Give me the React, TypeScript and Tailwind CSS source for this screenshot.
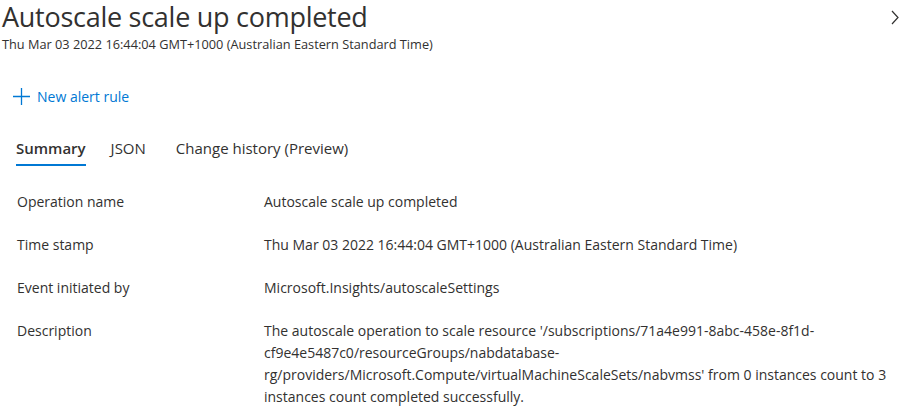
import React from 'react';

const font = { fontFamily: '"Open Sans", "Noto Sans", sans-serif' };

const rows: { label: string; value: string }[] = [
  { label: 'Operation name', value: 'Autoscale scale up completed' },
  { label: 'Time stamp', value: 'Thu Mar 03 2022 16:44:04 GMT+1000 (Australian Eastern Standard Time)' },
  { label: 'Event initiated by', value: 'Microsoft.Insights/autoscaleSettings' },
  {
    label: 'Description',
    value:
      "The autoscale operation to scale resource '/subscriptions/71a4e991-8abc-458e-8f1d-cf9e4e5487c0/resourceGroups/nabdatabase-rg/providers/Microsoft.Compute/virtualMachineScaleSets/nabvmss' from 0 instances count to 3 instances count completed successfully.",
  },
];

export default function App() {
  return (
    <div className="w-[900px] h-[413px] overflow-hidden bg-white text-[#323130]" style={font}>
      {/* header */}
      <div className="flex items-start justify-between pl-[2px] pr-[1px] pt-[1px]">
        <div>
          <h1 className="text-[27px] leading-[31px] tracking-[-0.27px] font-normal">Autoscale scale up completed</h1>
          <div className="text-[12.75px] leading-[16px] mt-[4px]">
            Thu Mar 03 2022 16:44:04 GMT+1000 (Australian Eastern Standard Time)
          </div>
        </div>
        <svg width="8" height="15" viewBox="0 0 8 15" className="mt-[9px]">
          <path d="M1 1l6 6.5-6 6.5" fill="none" stroke="#323130" strokeWidth="1.2" />
        </svg>
      </div>

      {/* command */}
      <button className="flex items-center gap-[7px] ml-[13px] mt-[34px] h-[20px] text-[14px] text-[#0078d4]">
        <svg width="17" height="17" viewBox="0 0 17 17">
          <path d="M8.5 0v17M0 8.5h17" stroke="#0078d4" strokeWidth="1.3" />
        </svg>
        New alert rule
      </button>

      {/* tabs */}
      <div className="flex ml-[16px] mt-[32px] text-[15px]">
        <div className="flex flex-col">
          <span className="font-semibold leading-[20px]">Summary</span>
          <span className="h-[2px] bg-[#0078d4] mt-[6px]" />
        </div>
        <span className="leading-[20px] ml-[25px]">JSON</span>
        <span className="leading-[20px] ml-[30px]">Change history (Preview)</span>
      </div>

      {/* details */}
      <div className="mt-[25px] text-[14px]">
        {rows.map(r => (
          <div key={r.label} className="flex pl-[17px] mb-[21px]">
            <div className="w-[247px] shrink-0 leading-[22px]">{r.label}</div>
            <div className="w-[632px] leading-[22px]">{r.value}</div>
          </div>
        ))}
      </div>
    </div>
  );
}
